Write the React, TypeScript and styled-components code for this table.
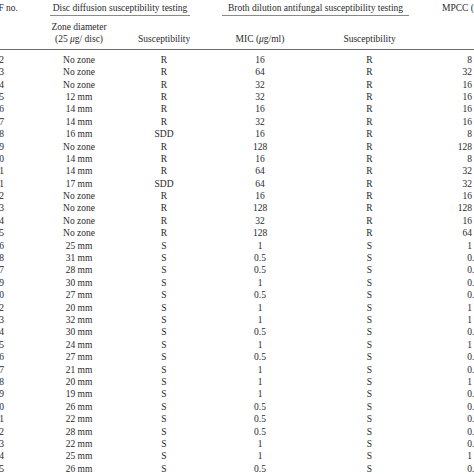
import React from "react";
import styled, { createGlobalStyle } from "styled-components";

const GlobalStyle = createGlobalStyle`
  html, body { margin: 0; padding: 0; background: #ffffff; }
  body { font-family: "Liberation Serif", "Times New Roman", serif; }
`;

const COLS = "44px 118px 52px 140px 79px 100px";

const Page = styled.div`
  width: 474px;
  height: 474px;
  overflow: hidden;
  background: #ffffff;
  color: #2a2a2a;
  font-family: "Liberation Serif", "Times New Roman", serif;
  font-size: 9.5px;
`;

const Sheet = styled.div`
  margin-left: -24px;
  width: 533px;
`;

const HeaderTop = styled.div`
  display: grid;
  grid-template-columns: ${COLS};
  height: 16px;
`;

const TopCell = styled.div`
  padding-top: 2px;
  line-height: 12px;
  white-space: nowrap;
`;

const IdHead = styled(TopCell)`
  text-align: right;
  padding-right: 2px;
`;

const GroupHead = styled(TopCell)<{ $inset: number }>`
  grid-column: span 2;
  margin-left: ${(p) => p.$inset}px;
  text-align: center;
  box-sizing: border-box;
  height: 16px;
  border-bottom: 1px solid #8a8a8a;
`;

const MpccHead = styled(TopCell)`
  padding-left: 33px;
`;

const HeaderSub = styled.div`
  display: grid;
  grid-template-columns: ${COLS};
  box-sizing: border-box;
  height: 34px;
  border-bottom: 1px solid #6a6a6a;
  margin-left: 24px;
  padding-right: 24px;
  margin-right: 0;
  position: relative;
`;

const SubGrid = styled.div`
  display: grid;
  grid-template-columns: ${COLS};
  height: 100%;
  margin-left: -24px;
`;

const SubCell = styled.div`
  align-self: end;
  text-align: center;
  line-height: 11.5px;
  padding-bottom: 3.75px;
  white-space: nowrap;
`;

const Body = styled.div`
  padding-top: 3.8px;
`;

const Row = styled.div`
  display: grid;
  grid-template-columns: ${COLS};
  height: 12.4px;
  line-height: 12.4px;
  white-space: nowrap;
`;

const IdCell = styled.div`
  text-align: right;
  padding-right: 16px;
`;

const Center = styled.div`
  text-align: center;
`;

const MpccCell = styled.div`
  display: flex;
`;

const IntPart = styled.span<{ $w: number }>`
  display: inline-block;
  width: ${(p) => p.$w}px;
  text-align: right;
`;

const FracPart = styled.span`
  display: inline-block;
  text-align: left;
`;

const Mu = styled.i`
  font-style: italic;
`;

type R = [string, string, string, string, string, string];

const rows: R[] = [
  ["2", "No zone", "R", "16", "R", "8"],
  ["3", "No zone", "R", "64", "R", "32"],
  ["4", "No zone", "R", "32", "R", "16"],
  ["5", "12 mm", "R", "32", "R", "16"],
  ["6", "14 mm", "R", "16", "R", "16"],
  ["7", "14 mm", "R", "32", "R", "16"],
  ["8", "16 mm", "SDD", "16", "R", "8"],
  ["9", "No zone", "R", "128", "R", "128"],
  ["0", "14 mm", "R", "16", "R", "8"],
  ["1", "14 mm", "R", "64", "R", "32"],
  ["1", "17 mm", "SDD", "64", "R", "32"],
  ["2", "No zone", "R", "16", "R", "16"],
  ["3", "No zone", "R", "128", "R", "128"],
  ["4", "No zone", "R", "32", "R", "16"],
  ["5", "No zone", "R", "128", "R", "64"],
  ["6", "25 mm", "S", "1", "S", "1"],
  ["8", "31 mm", "S", "0.5", "S", "0.5"],
  ["7", "28 mm", "S", "0.5", "S", "0.5"],
  ["9", "30 mm", "S", "1", "S", "0.5"],
  ["0", "27 mm", "S", "0.5", "S", "0.5"],
  ["2", "20 mm", "S", "1", "S", "1"],
  ["3", "32 mm", "S", "1", "S", "1"],
  ["4", "30 mm", "S", "0.5", "S", "0.5"],
  ["5", "24 mm", "S", "1", "S", "1"],
  ["6", "27 mm", "S", "0.5", "S", "0.5"],
  ["7", "21 mm", "S", "1", "S", "0.5"],
  ["8", "20 mm", "S", "1", "S", "1"],
  ["9", "19 mm", "S", "1", "S", "0.5"],
  ["0", "26 mm", "S", "0.5", "S", "0.5"],
  ["1", "22 mm", "S", "0.5", "S", "0.5"],
  ["2", "28 mm", "S", "0.5", "S", "0.5"],
  ["3", "22 mm", "S", "1", "S", "0.5"],
  ["4", "25 mm", "S", "1", "S", "1"],
  ["5", "26 mm", "S", "0.5", "S", "0.5"],
];

const Decimal: React.FC<{ value: string; w: number }> = ({ value, w }) => {
  const [i, f] = value.split(".");
  return (
    <>
      <IntPart $w={w}>{i}</IntPart>
      <FracPart>{f !== undefined ? "." + f : ""}</FracPart>
    </>
  );
};

export default function App() {
  return (
    <>
      <GlobalStyle />
      <Page>
        <Sheet>
          <HeaderTop>
            <IdHead>NCF no.</IdHead>
            <GroupHead $inset={30}>Disc diffusion susceptibility testing</GroupHead>
            <GroupHead $inset={32}>Broth dilution antifungal susceptibility testing</GroupHead>
            <MpccHead>MPCC (μg/ml)</MpccHead>
          </HeaderTop>
          <HeaderSub>
            <SubGrid>
              <SubCell />
              <SubCell>
                Zone diameter
                <br />
                (25 <Mu>μ</Mu>g/ disc)
              </SubCell>
              <SubCell>Susceptibility</SubCell>
              <SubCell>
                MIC (<Mu>μ</Mu>g/ml)
              </SubCell>
              <SubCell>Susceptibility</SubCell>
              <SubCell />
            </SubGrid>
          </HeaderSub>
          <Body>
            {rows.map((r, idx) => (
              <Row key={idx}>
                <IdCell>{r[0]}</IdCell>
                <Center>{r[1]}</Center>
                <Center>{r[2]}</Center>
                <Center>{r[3]}</Center>
                <Center>{r[4]}</Center>
                <MpccCell>
                  <Decimal value={r[5]} w={63} />
                </MpccCell>
              </Row>
            ))}
          </Body>
        </Sheet>
      </Page>
    </>
  );
}
